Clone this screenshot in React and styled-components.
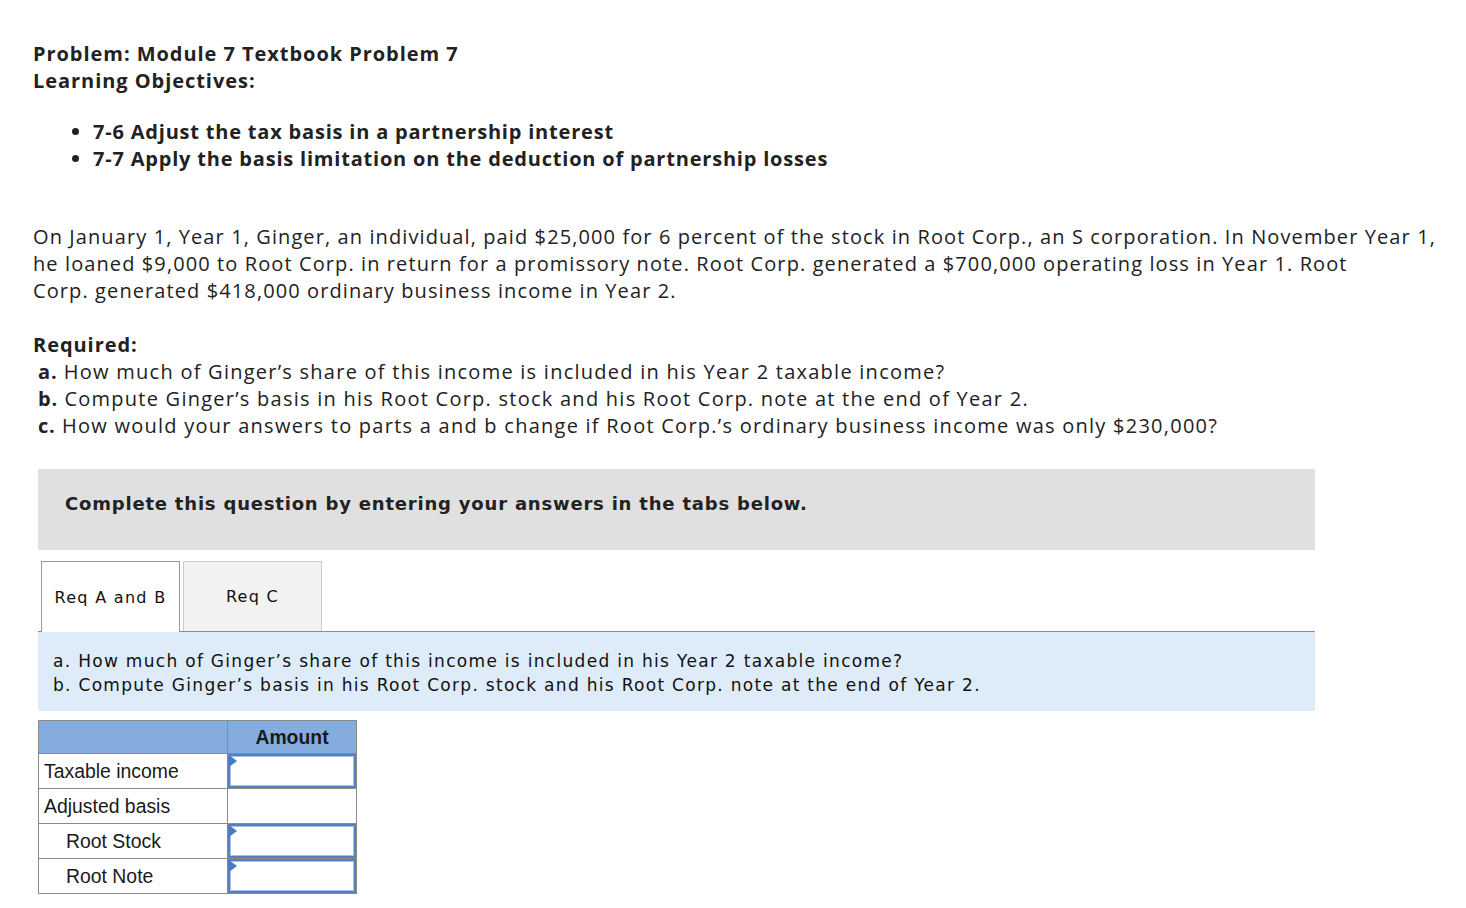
import React from "react";
import styled, { createGlobalStyle } from "styled-components";

const GlobalStyle = createGlobalStyle`
  body {
    margin: 0;
    background: #ffffff;
    color: #222222;
    font-family: "Open Sans", "Liberation Sans", sans-serif;
  }
`;

const Page = styled.div`
  padding: 40px 0 0 33px;
  width: 1420px;
`;

const Heading = styled.div`
  font-weight: 700;
  font-size: 20px;
  line-height: 27px;
  letter-spacing: 0.95px;
`;

const Objectives = styled.ul`
  margin: 24px 0 0 0;
  padding: 0 0 0 60px;
  font-weight: 700;
  font-size: 20px;
  line-height: 27px;
  letter-spacing: 0.8px;
`;

const Paragraph = styled.p`
  margin: 51px 0 0 0;
  font-size: 20px;
  line-height: 27px;
  letter-spacing: 1.1px;
  white-space: nowrap;
`;

const Required = styled.div`
  margin-top: 27px;
  font-size: 20px;
  line-height: 27px;
`;

const Part = styled.div`
  padding-left: 5px;
  letter-spacing: 1.25px;
  b {
    font-weight: 700;
    letter-spacing: 0.8px;
  }
`;

const Notice = styled.div`
  margin: 30px 0 0 5px;
  width: 1277px;
  height: 81px;
  box-sizing: border-box;
  background: #e0e0e0;
  padding: 24px 0 0 27px;
  font-family: "DejaVu Sans", Verdana, sans-serif;
  font-weight: 700;
  font-size: 18px;
  letter-spacing: 0.8px;
`;

const Tabs = styled.div`
  margin: 11px 0 0 5px;
  width: 1277px;
  display: flex;
  gap: 3px;
  padding-left: 3px;
  box-sizing: border-box;
  border-bottom: 1px solid #8c8c8c;
`;

const Tab = styled.div`
  width: 139px;
  box-sizing: border-box;
  display: flex;
  align-items: center;
  justify-content: center;
  font-family: "DejaVu Sans", Verdana, sans-serif;
  font-size: 16px;
  letter-spacing: 1.3px;
  color: #111;
  background: ${({ active }) => (active ? "#ffffff" : "#f2f2f2")};
  border: 1px solid ${({ active }) => (active ? "#999999" : "#cccccc")};
  border-bottom: none;
  margin-bottom: ${({ active }) => (active ? "-1px" : "0")};
  height: ${({ active }) => (active ? "71px" : "70px")};
`;

const Prompt = styled.div`
  margin-left: 5px;
  width: 1277px;
  box-sizing: border-box;
  background: #deebf8;
  padding: 17px 0 14px 15px;
  font-family: "DejaVu Sans", Verdana, sans-serif;
  font-size: 17px;
  letter-spacing: 1.3px;
  line-height: 24px;
  color: #111;
`;

const Table = styled.table`
  margin: 9px 0 0 5px;
  border-collapse: collapse;
  font-family: "Liberation Sans", Arial, sans-serif;
  font-size: 19.4px;
  color: #1a1a1a;
`;

const HeadCell = styled.th`
  background: #84acdf;
  border: 1px solid #8a8a8a;
  height: 32px;
  padding: 0;
  font-weight: 700;
  text-align: center;
  width: ${({ wide }) => (wide ? "188px" : "128px")};
`;

const LabelCell = styled.td`
  border: 1px solid #8a8a8a;
  height: 34px;
  padding: 0 0 0 ${({ indent }) => (indent ? "27px" : "5px")};
`;

const AmountCell = styled.td`
  border: 1px solid #8a8a8a;
  padding: 0;
  height: 34px;
`;

const Input = styled.div`
  position: relative;
  height: 34px;
  box-sizing: border-box;
  border: 2px solid #5580c0;
  box-shadow: inset 0 0 0 1px #a9c3e6;
  background: #fff;

  &::before {
    content: "";
    position: absolute;
    left: -1px;
    top: -1px;
    border-left: 8px solid #4a7bc0;
    border-top: 6px solid transparent;
    border-bottom: 6px solid transparent;
  }
`;

const rows = [
  { label: "Taxable income", input: true },
  { label: "Adjusted basis", input: false },
  { label: "Root Stock", input: true, indent: true },
  { label: "Root Note", input: true, indent: true },
];

const App = () => {
  return (
    <Page>
      <GlobalStyle />
      <Heading>Problem: Module 7 Textbook Problem 7</Heading>
      <Heading>Learning Objectives:</Heading>
      <Objectives>
        <li>7-6 Adjust the tax basis in a partnership interest</li>
        <li>7-7 Apply the basis limitation on the deduction of partnership losses</li>
      </Objectives>
      <Paragraph>
        On January 1, Year 1, Ginger, an individual, paid $25,000 for 6 percent of the stock in
        Root Corp., an S corporation. In November Year 1,
        <br />
        he loaned $9,000 to Root Corp. in return for a promissory note. Root Corp. generated a
        $700,000 operating loss in Year 1. Root
        <br />
        Corp. generated $418,000 ordinary business income in Year 2.
      </Paragraph>
      <Required>
        <Heading>Required:</Heading>
        <Part>
          <b>a.</b> How much of Ginger’s share of this income is included in his Year 2 taxable income?
        </Part>
        <Part>
          <b>b.</b> Compute Ginger’s basis in his Root Corp. stock and his Root Corp. note at the end of Year 2.
        </Part>
        <Part>
          <b>c.</b> How would your answers to parts a and b change if Root Corp.’s ordinary business income was only $230,000?
        </Part>
      </Required>
      <Notice>Complete this question by entering your answers in the tabs below.</Notice>
      <Tabs>
        <Tab active>Req A and B</Tab>
        <Tab>Req C</Tab>
      </Tabs>
      <Prompt>
        <div>a. How much of Ginger’s share of this income is included in his Year 2 taxable income?</div>
        <div>b. Compute Ginger’s basis in his Root Corp. stock and his Root Corp. note at the end of Year 2.</div>
      </Prompt>
      <Table>
        <thead>
          <tr>
            <HeadCell wide />
            <HeadCell>Amount</HeadCell>
          </tr>
        </thead>
        <tbody>
          {rows.map((row) => (
            <tr key={row.label}>
              <LabelCell indent={row.indent}>{row.label}</LabelCell>
              <AmountCell>{row.input && <Input />}</AmountCell>
            </tr>
          ))}
        </tbody>
      </Table>
    </Page>
  );
};

export default App;
